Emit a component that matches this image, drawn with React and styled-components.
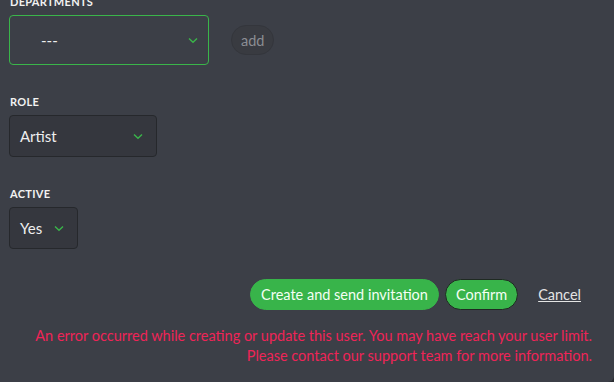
import React from 'react';
import styled, { createGlobalStyle } from 'styled-components';

const GlobalStyle = createGlobalStyle`
  html, body {
    margin: 0;
    padding: 0;
    background: #2a2c31;
    overflow: hidden;
  }
  * { box-sizing: border-box; }
`;

const Panel = styled.div`
  width: 614px;
  height: 382px;
  background: #3c3f47;
  border-bottom-right-radius: 6px;
  font-family: Lato, 'Open Sans', sans-serif;
  color: #e6e6e6;
  padding: 0 22px 0 9px;
  overflow: hidden;
`;

const Content = styled.div`
  margin-top: -5px;
`;

const Field = styled.div`
  margin-bottom: ${props => props.$gap || 30}px;
`;

const Label = styled.div`
  font-size: 11px;
  font-weight: 700;
  letter-spacing: 0.3px;
  text-transform: uppercase;
  color: #f2f2f2;
  padding-left: 1px;
  line-height: 14px;
  margin-bottom: 6px;
`;

const Row = styled.div`
  display: flex;
  align-items: center;
  gap: 22px;
`;

const Select = styled.div`
  display: flex;
  align-items: center;
  justify-content: space-between;
  width: ${props => props.$width}px;
  height: ${props => props.$height}px;
  padding: 0 ${props => props.$padRight}px 0 ${props => props.$padLeft}px;
  background: ${props => (props.$active ? '#3c3f47' : '#35373e')};
  border: 1px solid ${props => (props.$active ? '#3ab54a' : '#26282c')};
  border-radius: 4px;
  font-size: 15px;
  color: #eeeeee;
`;

const Chevron = () => (
  <svg width="10" height="7" viewBox="0 0 10 7">
    <path d="M1 1.5 L5 5.2 L9 1.5" fill="none" stroke="#3ab54a" strokeWidth="1.4" />
  </svg>
);

const AddButton = styled.button`
  height: 30px;
  padding: 0 9px;
  border-radius: 15px;
  border: 1px solid #34363c;
  background: #393b41;
  color: #8c8e94;
  font-family: inherit;
  font-size: 14.5px;
`;

const Actions = styled.div`
  display: flex;
  justify-content: flex-end;
  align-items: center;
  gap: 6px;
  margin-top: 26px;
  padding-right: 11px;
`;

const GreenButton = styled.button`
  height: 31px;
  padding: 0 ${props => (props.$outlined ? 10 : 10)}px;
  border-radius: 16px;
  border: 1px solid ${props => (props.$outlined ? '#1f2a22' : '#38b44a')};
  background: #38b44a;
  color: #f4fff4;
  font-family: inherit;
  font-size: 14.5px;
`;

const CancelLink = styled.a`
  margin-left: 14px;
  color: #e4e4e4;
  font-size: 14.5px;
  text-decoration: underline;
  cursor: pointer;
`;

const ErrorText = styled.div`
  margin-top: 16px;
  text-align: right;
  color: #ef2457;
  font-size: 14.5px;
  line-height: 20px;
`;

export default function App() {
  return (
    <>
      <GlobalStyle />
      <Panel>
        <Content>
          <Field $gap={30}>
            <Label>Departments</Label>
            <Row>
              <Select $active $width={200} $height={50} $padLeft={31} $padRight={10}>
                <span>---</span>
                <Chevron />
              </Select>
              <AddButton>add</AddButton>
            </Row>
          </Field>
          <Field $gap={30}>
            <Label>Role</Label>
            <Select $width={148} $height={42} $padLeft={10} $padRight={13}>
              <span>Artist</span>
              <Chevron />
            </Select>
          </Field>
          <Field $gap={0}>
            <Label>Active</Label>
            <Select $width={69} $height={42} $padLeft={10} $padRight={13}>
              <span>Yes</span>
              <Chevron />
            </Select>
          </Field>
          <Actions>
            <GreenButton>Create and send invitation</GreenButton>
            <GreenButton $outlined>Confirm</GreenButton>
            <CancelLink>Cancel</CancelLink>
          </Actions>
          <ErrorText>
            An error occurred while creating or update this user. You may have reach your user limit.
            <br />
            Please contact our support team for more information.
          </ErrorText>
        </Content>
      </Panel>
    </>
  );
}
